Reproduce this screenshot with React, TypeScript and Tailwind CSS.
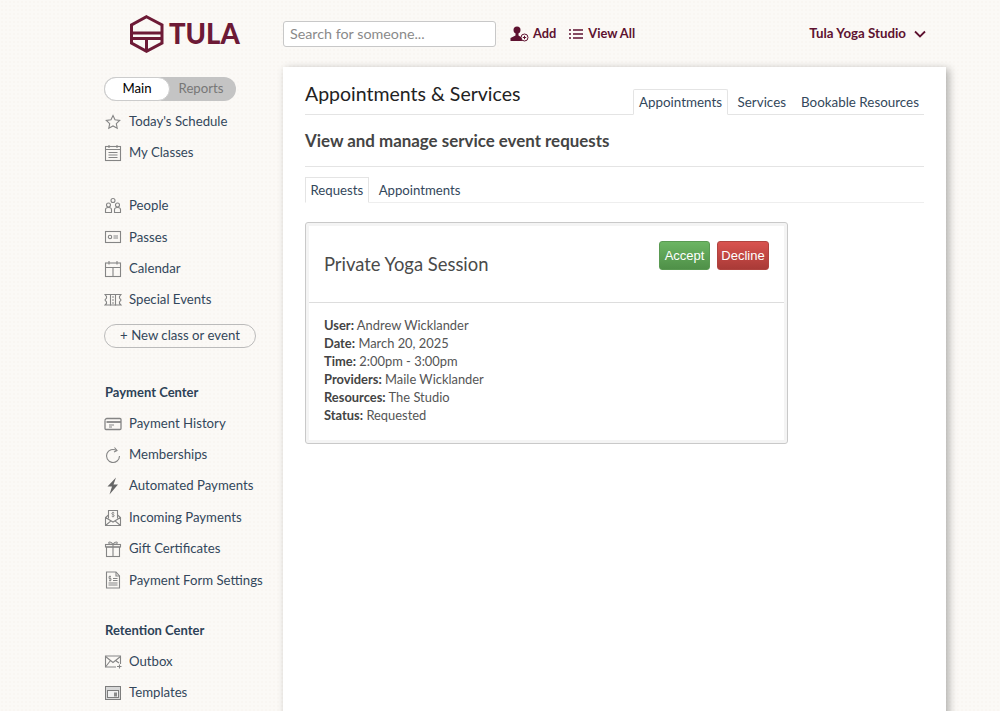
import React from "react";

const ic = { fill: "none", stroke: "#858585", strokeWidth: 1.1 } as const;

const Svg = ({ children, w = 18, h = 18 }: { children: React.ReactNode; w?: number; h?: number }) => (
  <svg width={w} height={h} viewBox="0 0 18 18" {...ic}>{children}</svg>
);

const icons: Record<string, React.ReactNode> = {
  star: <Svg><path d="M9 2.500l2 4.300 4.700.6-3.400 3.200.9 4.600L9 12.900l-4.200 2.300.9-4.600-3.400-3.200 4.700-.6z" /></Svg>,
  classes: <Svg><rect x="1.500" y="2.500" width="15" height="14" /><path d="M1.500 5.500h15M5 1v3M13 1v3M4.500 8.500h9M4.500 11h9M4.500 13.500h9" /></Svg>,
  people: <Svg><circle cx="9" cy="3.500" r="2" /><circle cx="4.500" cy="8" r="2" /><circle cx="13.500" cy="8" r="2" /><path d="M1.500 15.500v-3a3 2 0 0 1 6 0v3zM10.500 15.500v-3a3 2 0 0 1 6 0v3z" /></Svg>,
  passes: <Svg><rect x="1.500" y="3.500" width="15" height="11" /><circle cx="6" cy="9" r="1.700" /><path d="M9.500 8h4.500M9.500 10h4.500" /></Svg>,
  calendar: <Svg><rect x="1.500" y="3" width="15" height="13.500" /><path d="M1.500 7.500h15M9 7.500v9M5 1v3.500M13 1v3.500" /></Svg>,
  ticket: <Svg><path d="M1 3.500h16l-1.500 2v1.500l1.500 2-1.500 2v1.500l1.500 1.500h-16l1.500-1.500V11L1 9l1.500-2V5.500z" /><path d="M6.500 3.500v11M11.500 3.500v11M8 6h2M8 9h2M8 12h2" /></Svg>,
  history: <Svg><path d="M3 3.500h13a1 1 0 0 1 1 1v9a1 1 0 0 1-1 1H2a1 1 0 0 1-1-1v-8" strokeWidth="1.300" /><path d="M1 5.500a2 2 0 0 1 2-2" strokeWidth="1.300" /><path d="M2.500 7h14.500" strokeWidth="1.800" /><path d="M5 10h5M5 12h3" /></Svg>,
  refresh: <Svg><path d="M12.500 4.500A6.500 6.500 0 1 0 15.500 10" /><path d="M10.500 1.500l2.500 3-3 1.500" /></Svg>,
  bolt: <svg width="18" height="18" viewBox="0 0 18 18"><path d="M12 .5L3.500 9.500h4.500l-2.500 8 8.500-10H9.500z" fill="#666" /></svg>,
  incoming: <Svg><path d="M4.500 6L1.500 8.500v8h15v-8l-3-2.500M1.500 8.500L9 13l7.500-4.500M1.500 16.500L7 11.800M16.500 16.500L11 11.800" /><path d="M4.500 9.500V1.500h9v8" /><path d="M10.300 4c-.3-.6-2.600-.8-2.600.5 0 1.400 2.600.8 2.600 2.200 0 1.300-2.300 1.100-2.600.5M9 2.800v5.400" strokeWidth="0.800" /></Svg>,
  gift: <Svg><rect x="2.500" y="7" width="13" height="9.500" /><rect x="1.500" y="4.500" width="15" height="2.500" /><path d="M9 4.500v12M9 4.500C7 1 4 1.500 5 3.500c.4.7 2 1 4 1zM9 4.500c2-3.500 5-3 4-1-.4.7-2 1-4 1z" /></Svg>,
  form: <Svg><path d="M2.500 1h9.500l3.500 4v12h-13z" /><path d="M12 1v4h3.500M9 7.500h4.500M9 9.500h4.500M4.500 12h9M4.500 14h9" /><path d="M7 5.500H5v2h2v2H5M6 4.500v6" strokeWidth="0.800" /></Svg>,
  outbox: <Svg><path d="M12 14H1.500V3h15v8" /><path d="M1.500 3.500L9 9.500l7.500-6M1.500 14l5-6.500M15 10L11.500 7.500" /><path d="M13 13.500h4.500M15.500 11.500v4" /></Svg>,
  templates: <svg width="18" height="18" viewBox="0 0 18 18"><rect x="1.500" y="2.500" width="15" height="13" fill="#d8d8d8" stroke="#7d7d7d" /><rect x="3.500" y="6.500" width="11" height="7" fill="#f0f0f0" stroke="#7d7d7d" /><rect x="10" y="8.500" width="3" height="4" fill="#8a8a8a" /></svg>,
};

const F = "font-['Lato','Liberation_Sans',sans-serif]";

const Item = ({ icon, label }: { icon: string; label: string }) => (
  <a className="flex h-[31.400px] items-center text-[13.200px] text-[#33475b]">
    <span className="flex w-[25px] shrink-0 items-center">{icons[icon]}</span>
    <span className="whitespace-nowrap">{label}</span>
  </a>
);

const Rows = ({ lines }: { lines: [string, string][] }) => (
  <div className="text-[12.900px] leading-[18px] text-[#555]">
    {lines.map(([k, v]) => (
      <div key={k}>
        <b className="font-bold text-[#444]">{k}:</b> {v}
      </div>
    ))}
  </div>
);

export default function App() {
  return (
    <div className={`${F} h-[711px] w-[1000px] overflow-hidden bg-[#fbf9f6] bg-[radial-gradient(#f9f6f2_1px,transparent_1px)] bg-[length:4px_4px]`}>
      <header className="flex h-[67px] items-center">
        <div className="ml-[129px] flex w-[154px] items-center">
          <svg width="35" height="38" viewBox="0 0 35 38" fill="none" stroke="#6d1a36" strokeWidth="3">
            <path d="M17.500 1.700L33 10v18L17.500 36.300 2.500 28V10z" />
            <path d="M2.500 18h30M2.500 23.500h30M17.500 23.500v12" />
          </svg>
          <span className="ml-[5px] text-[27.500px] leading-none font-black text-[#6d1a36]">TULA</span>
        </div>
        <input
          readOnly
          placeholder="Search for someone..."
          className="h-[26px] w-[213px] rounded-[3px] border border-[#c8c8c8] bg-white px-[6px] text-[14.300px] text-[#555] placeholder:text-[#8a8a8a]"
        />
        <div className="ml-[14px] flex items-center text-[12.800px] font-bold text-[#5e1230]">
          <svg width="20" height="18" viewBox="0 0 20 18" className="mr-[3px]">
            <circle cx="7" cy="5" r="3.500" fill="#5e1230" />
            <path d="M5.500 8h3v2.500l4 2.500v3H0.500v-3l5-2.500z" fill="#5e1230" />
            <circle cx="14.500" cy="12.500" r="3.500" fill="#fbf9f6" stroke="#5e1230" />
            <path d="M12.800 12.500h3.400M14.500 10.800v3.400" stroke="#5e1230" />
          </svg>
          Add
        </div>
        <div className="ml-[13px] flex items-center text-[12.800px] font-bold text-[#5e1230]">
          <svg width="14" height="12" viewBox="0 0 14 12" className="mr-[5px]" stroke="#5e1230" strokeWidth="1.500">
            <path d="M0 2h2M4 2h10M0 6h2M4 6h10M0 10h2M4 10h10" />
          </svg>
          View All
        </div>
        <div className="mr-[74px] ml-auto flex items-center text-[13.300px] font-bold text-[#5e1230]">
          Tula Yoga Studio
          <svg width="12" height="8" viewBox="0 0 12 8" fill="none" stroke="#5e1230" strokeWidth="1.800" className="ml-[8px]">
            <path d="M1 1.500l5 5 5-5" />
          </svg>
        </div>
      </header>
      <div className="flex">
        <aside className="ml-[104px] w-[179px] shrink-0">
          <div className="mt-[10px] flex h-[24px] w-[132px] rounded-full bg-[#c4c4c4] text-[13.200px]">
            <div className="flex w-[66px] items-center justify-center rounded-full border border-[#ccc] bg-white text-black">Main</div>
            <div className="flex flex-1 items-center justify-center pr-[4px] text-[#777]">Reports</div>
          </div>
          <div className="mt-[5px]">
            <Item icon="star" label="Today's Schedule" />
            <Item icon="classes" label="My Classes" />
          </div>
          <div className="mt-[21.600px]">
            <Item icon="people" label="People" />
            <Item icon="passes" label="Passes" />
            <Item icon="calendar" label="Calendar" />
            <Item icon="ticket" label="Special Events" />
          </div>
          <div className="mt-[8.400px] flex h-[24px] w-[152px] items-center justify-center rounded-full border border-[#bbb] text-[13.200px] text-[#33475b]">
            + New class or event
          </div>
          <div className="mt-[36px] ml-[1px] h-[16px] text-[13px] leading-[16px] font-bold text-[#2d4257]">Payment Center</div>
          <div className="mt-[7.500px]">
            <Item icon="history" label="Payment History" />
            <Item icon="refresh" label="Memberships" />
            <Item icon="bolt" label="Automated Payments" />
            <Item icon="incoming" label="Incoming Payments" />
            <Item icon="gift" label="Gift Certificates" />
            <Item icon="form" label="Payment Form Settings" />
          </div>
          <div className="mt-[25.500px] ml-[1px] h-[16px] text-[13px] leading-[16px] font-bold text-[#2d4257]">Retention Center</div>
          <div className="mt-[8.500px]">
            <Item icon="outbox" label="Outbox" />
            <Item icon="templates" label="Templates" />
          </div>
        </aside>
        <main className="h-[700px] w-[663px] shrink-0 bg-white px-[22px] shadow-[3px_2px_8px_rgba(0,0,0,0.3)]">
          <div className="flex h-[48px] items-end justify-between border-b border-[#e4e4e4]">
            <h1 className="mb-[8px] text-[19.500px] leading-[24px] text-[#222]">Appointments &amp; Services</h1>
            <div className="mb-[-1px] flex text-[13.400px] text-[#33475b]">
              <div className="flex h-[26px] items-center rounded-t-[2px] border border-[#e4e4e4] border-b-white bg-white px-[4.500px]">Appointments</div>
              <div className="flex h-[26px] items-center px-[10px]">Services</div>
              <div className="flex h-[26px] items-center px-[5px]">Bookable Resources</div>
            </div>
          </div>
          <div className="flex h-[52px] items-center border-b border-[#e4e4e4] text-[16.900px] font-bold text-[#444]">
            View and manage service event requests
          </div>
          <div className="mt-[10px] flex h-[26px] border-b border-[#eee] text-[13.200px] text-[#33475b]">
            <div className="flex h-[26px] items-center border border-[#e4e4e4] border-b-white bg-white px-[4.500px] pt-[1px]">Requests</div>
            <div className="flex h-[26px] items-center px-[10px] pt-[1px]">Appointments</div>
          </div>
          <section className="mt-[19px] w-[483px] rounded-[3px] border border-[#c9c9c9] bg-white p-[3px] shadow-[inset_0_0_0_3px_#f4f4f4]">
            <div className="flex h-[77px] items-start justify-between border-b border-[#ddd] px-[15px]">
              <h2 className="mt-[26px] text-[18.400px] leading-[24px] text-[#4a4a4a]">Private Yoga Session</h2>
              <div className="mt-[15px] flex gap-[7px] font-['Liberation_Sans',sans-serif] text-[13px] text-white">
                <button className="h-[29px] w-[51px] rounded-[3px] border border-[#5a9a52] bg-gradient-to-b from-[#6cb563] to-[#4f9048]">Accept</button>
                <button className="h-[29px] w-[52px] rounded-[3px] border border-[#b04440] bg-gradient-to-b from-[#d9534f] to-[#a93a37]">Decline</button>
              </div>
            </div>
            <div className="px-[15px] pt-[13px] pb-[16px]">
              <Rows
                lines={[
                  ["User", "Andrew Wicklander"],
                  ["Date", "March 20, 2025"],
                  ["Time", "2:00pm - 3:00pm"],
                  ["Providers", "Maile Wicklander"],
                  ["Resources", "The Studio"],
                  ["Status", "Requested"],
                ]}
              />
            </div>
          </section>
        </main>
      </div>
    </div>
  );
}
